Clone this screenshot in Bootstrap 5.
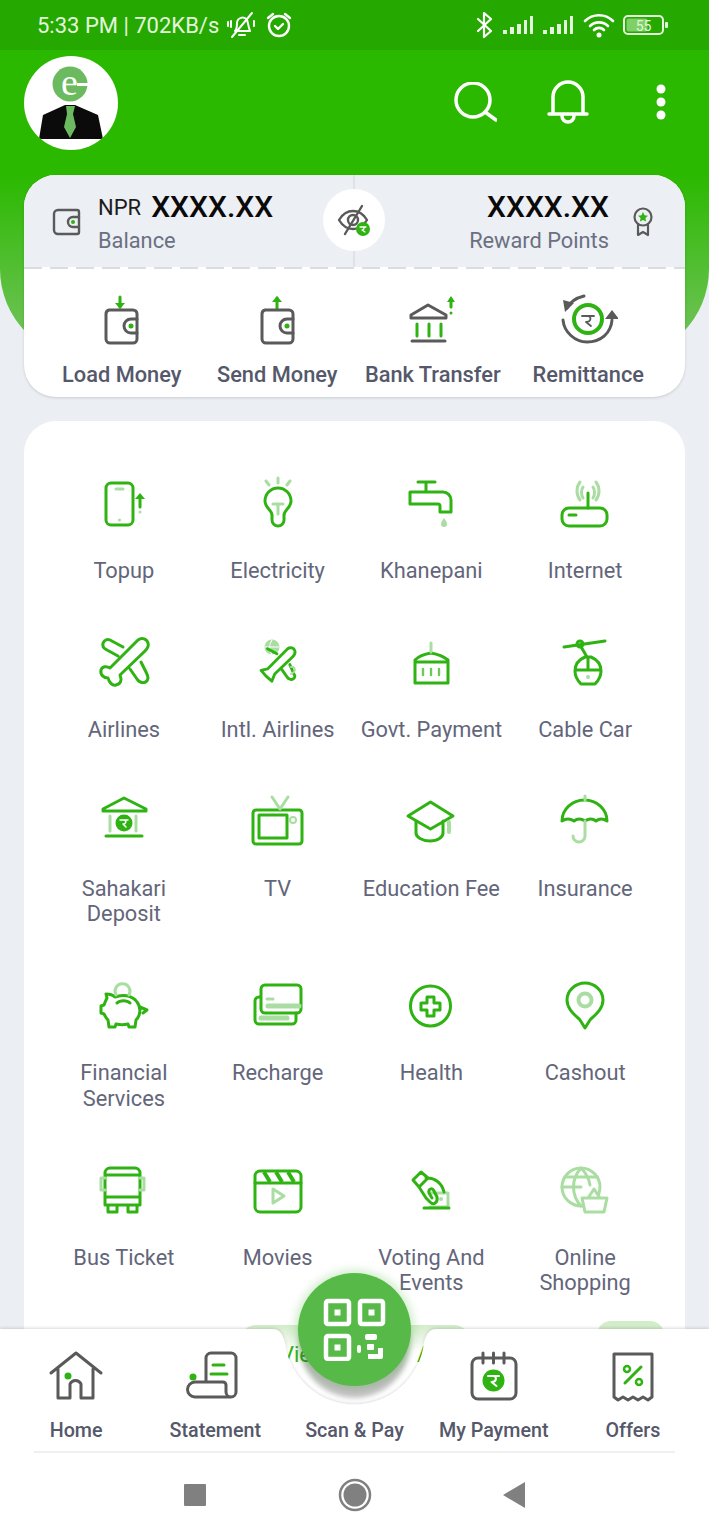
<!DOCTYPE html>
<html>
<head>
<title>eSewa home</title>
<link href="https://cdn.jsdelivr.net/npm/bootstrap@5.3.2/dist/css/bootstrap.min.css" rel="stylesheet">
<script src="https://cdn.jsdelivr.net/npm/bootstrap@5.3.2/dist/js/bootstrap.bundle.min.js"></script>
<style>
html, body { margin: 0; width: 709px; height: 1536px; overflow: hidden; background: #ebeff3; font-family: Roboto, "Liberation Sans", sans-serif; }
.phone { width: 709px; height: 1536px; overflow: hidden; position: relative; }
svg { display: block; }
.ic { fill: none; stroke: #2fb312; stroke-width: 3; stroke-linecap: round; stroke-linejoin: round; }
.pl { stroke: #a9dda1; }
.dk { stroke: #5a5a5a; }
.wh { stroke: #fff; }
.gf { fill: #2fb312; stroke: none; }
.pf { fill: #a9dda1; stroke: none; }
.df { fill: #5a5a5a; stroke: none; }

.status-bar { height: 50px; background: #25a900; padding: 0 41px 0 37px; color: #e4f5de; font-size: 22px; }
.hero { height: 309px; padding-top: 6px; background: linear-gradient(#2bb900 0, #2bb900 125px, #6cc254 280px); border-radius: 0 0 90px 90px / 0 0 90px 90px; }
.avatar { width: 94px; height: 94px; margin-left: 24px; border-radius: 50%; background: #fff; overflow: hidden; }
.top-actions { padding: 24px 40px 0 0; }
.top-actions .a1 { margin-right: 50px; }
.top-actions .a2 { margin-right: 64px; }

.content { margin-top: -184px; position: relative; padding: 0 24px; }
.bal-card { height: 222px; border-radius: 32px; background: #fff; overflow: hidden; box-shadow: 0 1px 3px rgba(0,0,0,.15); }
.bal-top { height: 94px; background: #eceff3; position: relative; padding: 0 32px 0 28px; }
.bal-top::after { content: ""; position: absolute; left: 0; right: 0; bottom: 0; height: 2px; background: repeating-linear-gradient(90deg, #d9dce0 0, #d9dce0 18px, #fff 18px, #fff 26px); }
.bal-top .divider { position: absolute; left: 329px; top: 0; bottom: 0; width: 2px; background: #dfe2e6; }
.eye-btn { position: absolute; left: 299px; top: 14px; width: 62px; height: 62px; border-radius: 50%; background: #fff; }
.npr { font-size: 22px; color: #1c1c1c; margin-right: 10px; }
.amt { font-size: 30px; font-weight: 500; color: #0a0a0a; line-height: 34px; }
.bal-label { font-size: 21.8px; color: #6b6f82; line-height: 26px; margin-top: 4px; }
.quick-row { padding: 19px 19px 0 20px; }
.quick-item { width: 155.5px; text-align: center; }
.quick-item svg { margin: 0 auto; }
.quick-item div { font-size: 21.8px; font-weight: 500; color: #55586b; line-height: 26px; margin-top: 14px; white-space: nowrap; }

.svc-card { margin-top: 24px; height: 1000px; border-radius: 32px; background: #fff; padding: 52px 23px 0; }
.svc-grid { row-gap: 49px; }
.svc-item { text-align: center; }
.svc-item svg { margin: 0 auto 24.5px; }
.svc-item div { font-size: 21.8px; color: #63667a; line-height: 25.5px; }
.pill-row { margin-top: 25.5px; height: 60px; margin-left: 193px; margin-right: -2px; }
.pill-a { width: 230px; height: 40px; margin-top: 4px; border-radius: 16px; text-align: center; color: #2fb312; font-size: 22px; line-height: 60px; word-spacing: 84px; white-space: nowrap; padding-left: 12px; background: linear-gradient(#d3ecca 0, #fff 26px); }
.pill-b { width: 67px; height: 30px; border-radius: 14px; background: #d3ecca; }

.bottom-nav { position: absolute; left: 0; right: 0; bottom: 0; height: 207px; }
.nav-shape { position: absolute; left: 0; top: -4px; }
.fab { position: absolute; left: 298px; top: -56px; width: 113px; height: 113px; border-radius: 50%; background: #57b947; box-shadow: 0 13px 5px -1px rgba(0,0,0,.24), 0 0 9px 3px rgba(87,185,71,.28); }
.fab svg { position: absolute; left: 25px; top: 25px; }
.nav-row { position: relative; padding: 16px 6.5px 0; }
.nav-row svg { margin: 0 auto; }
.nav-row div div { font-size: 19.7px; font-weight: 500; color: #55586b; line-height: 24px; margin-top: 14px; text-align: center; white-space: nowrap; }
.nav-rule { position: relative; margin: 8px 34px 0; height: 2px; background: #efefef; }
.sys-bar { position: relative; height: 84px; gap: 120px; }
.sys-bar svg { width: 40px; height: 40px; }
</style>
</head>
<body>
<div class="phone">

  <div class="status-bar d-flex align-items-center justify-content-between">
    <div class="d-flex align-items-center">
      <span>5:33 PM | 702KB/s</span>
      <svg class="ms-2" width="30" height="30" viewBox="0 0 30 30"><path class="ic wh" d="M8 21c2-2 2-4 2-8a5.500 5.500 0 0 1 10-3c1 2 1 6 3 11zM12 25h6M5 27 25 3M4 11v6M1 12v4M27 11v5" style="stroke-width:2"/></svg>
      <svg class="ms-2" width="28" height="28" viewBox="0 0 28 28"><circle class="ic wh" cx="14" cy="15" r="10" style="stroke-width:2.400"/><path class="ic wh" d="M3 7l5-4M25 7l-5-4M10 15l3 3 5-5" style="stroke-width:2.400"/></svg>
    </div>
    <div class="d-flex align-items-center">
      <svg class="me-1" width="20" height="30" viewBox="0 0 20 30"><path class="ic wh" d="M3 9l13 12-7 6V3l7 6L3 21" style="stroke-width:2.200"/></svg>
      <svg class="ms-1" width="32" height="18" viewBox="0 0 32 18"><path class="gf" style="fill:#e4f5de" d="M0 14h4v4H0zM7 11h4v7H7zM14 8h4v10h-4zM21 4h3v14h-3zM27 0h3v18h-3z"/></svg>
      <svg class="ms-2" width="32" height="18" viewBox="0 0 32 18"><path class="gf" style="fill:#e4f5de" d="M0 14h4v4H0zM7 11h4v7H7zM14 8h4v10h-4zM21 4h3v14h-3zM27 0h3v18h-3z"/></svg>
      <svg class="ms-2" width="32" height="26" viewBox="0 0 32 26"><path class="ic wh" d="M2 9a20 20 0 0 1 28 0M7 14a13 13 0 0 1 18 0M11 18a7 7 0 0 1 10 0" style="stroke-width:2.600"/><circle cx="16" cy="23" r="2.500" fill="#fff"/></svg>
      <svg class="ms-2" width="45" height="20" viewBox="0 0 45 20"><rect x="1" y="1" width="39" height="18" rx="4" fill="none" stroke="#e4f5de" stroke-width="2"/><rect x="3.500" y="3.500" width="21" height="13" rx="2" fill="#7fd066"/><rect x="42" y="7" width="3" height="6" rx="1" fill="#e4f5de"/><text x="20.500" y="15.500" font-size="14" fill="#e4f5de" text-anchor="middle" font-family="Roboto">55</text></svg>
    </div>
  </div>

  <div class="hero">
    <div class="d-flex justify-content-between align-items-start">
      <div class="avatar">
        <svg width="94" height="94" viewBox="0 0 94 94">
          <path fill="#0b0b0b" d="M15 83 19 59 41 49H51L74 59 79 83Z"/>
          <path fill="#6bba5f" d="M42 50h9l-2 8 3 13-6 11-6-11 3-13z"/>
          <circle cx="46" cy="28" r="17.500" fill="#6bba5f"/>
          <rect x="53" y="27" width="14" height="3" fill="#fff"/>
          <text x="45.500" y="39" font-size="38" fill="#fff" text-anchor="middle" font-family="Liberation Serif">e</text>
        </svg>
      </div>
      <div class="top-actions d-flex align-items-center">
        <svg class="a1" width="44" height="40" viewBox="0 0 44 40"><circle class="ic wh" cx="20" cy="18" r="17" style="stroke-width:3.500"/><path class="ic wh" d="M32 30 43 38" style="stroke-width:3.500"/></svg>
        <svg class="a2" width="42" height="44" viewBox="0 0 42 44"><path class="ic wh" d="M6 33V17a15 15 0 0 1 30 0v16M2 34h38" style="stroke-width:3.500"/><path class="ic wh" d="M15 36a6 6 0 0 0 12 0" style="stroke-width:3.500"/></svg>
        <svg width="16" height="36" viewBox="0 0 16 36"><circle cx="8" cy="5" r="4.500" fill="#fff"/><circle cx="8" cy="18" r="4.500" fill="#fff"/><circle cx="8" cy="31" r="4.500" fill="#fff"/></svg>
      </div>
    </div>
  </div>

  <div class="content">
    <div class="bal-card">
      <div class="bal-top d-flex align-items-center justify-content-between">
        <div class="divider"></div>
        <div class="d-flex align-items-center">
          <svg class="me-3" width="30" height="30" viewBox="0 0 30 30"><path class="ic dk" style="stroke-width:2.400" d="M6 3h19a2 2 0 0 1 2 2v20a2 2 0 0 1-2 2H6a4 4 0 0 1-4-4V7a4 4 0 0 1 4-4z"/><path class="ic dk" style="stroke-width:2.400" d="M27 10h-6a5 5 0 0 0 0 10h6"/><circle class="gf" cx="21" cy="15" r="2"/></svg>
          <div>
            <div class="d-flex align-items-center"><span class="npr">NPR</span><span class="amt">XXXX.XX</span></div>
            <div class="bal-label">Balance</div>
          </div>
        </div>
        <div class="eye-btn d-flex align-items-center justify-content-center">
          <svg width="36" height="36" viewBox="0 0 36 36"><path class="ic dk" style="stroke-width:2.400" d="M3 18c3-5 8-9 14-9s11 4 14 9c-3 5-8 9-14 9S6 23 3 18z"/><circle class="ic dk" style="stroke-width:2.400" cx="17" cy="18" r="5"/><path class="ic dk" style="stroke-width:2.400" d="M26 4 9 32"/><circle class="gf" cx="27" cy="27" r="7"/><path class="ic wh" style="stroke-width:1.300" d="M24 25h6M27 25c2 1 1 3-1 3l3 2"/></svg>
        </div>
        <div class="d-flex align-items-center">
          <div class="text-end">
            <div class="amt">XXXX.XX</div>
            <div class="bal-label">Reward Points</div>
          </div>
          <svg class="ms-4" width="20" height="30" viewBox="0 0 20 30"><circle class="ic dk" style="stroke-width:2.200" cx="10" cy="10" r="8.500"/><path class="ic dk" style="stroke-width:2.200" d="M5 17v11l5-3 5 3V17"/><path class="gf" d="m10 5 1.500 3.300 3.500.4-2.600 2.400.7 3.500L10 13l-3.100 1.600.7-3.500L5 8.700l3.500-.4z"/></svg>
        </div>
      </div>
      <div class="quick-row d-flex">
        <div class="quick-item">
          <svg width="60" height="60" viewBox="0 0 60 60"><path class="ic" d="M28 9v10"/><path class="gf" d="M23 15h10l-5 6z"/><path class="ic dk" d="M17 22h24a4 4 0 0 1 4 4v25a4 4 0 0 1-4 4H18a4 4 0 0 1-4-4V26a4 4 0 0 1 3-4z"/><path class="ic dk" d="M45 31h-6a7 7 0 0 0 0 14h6"/><circle class="gf" cx="39" cy="38" r="2.500"/></svg>
          <div>Load Money</div>
        </div>
        <div class="quick-item">
          <svg width="60" height="60" viewBox="0 0 60 60"><path class="ic" d="M30 10v10"/><path class="gf" d="M25 14h10l-5-6z"/><path class="ic dk" d="M18 22h24a4 4 0 0 1 4 4v25a4 4 0 0 1-4 4H19a4 4 0 0 1-4-4V26a4 4 0 0 1 3-4z"/><path class="ic dk" d="M46 31h-6a7 7 0 0 0 0 14h6"/><circle class="gf" cx="40" cy="38" r="2.500"/></svg>
          <div>Send Money</div>
        </div>
        <div class="quick-item">
          <svg width="60" height="60" viewBox="0 0 60 60"><path class="ic dk" d="M25 17 8 27v3h35v-3z"/><path class="ic" d="M14 36v12M26 36v12M38 36v12M48 11v8"/><path class="ic dk" d="M9 53h33"/><path class="gf" d="M44 14h8l-4-6z"/><circle class="gf" cx="48" cy="25" r="1.500"/></svg>
          <div>Bank Transfer</div>
        </div>
        <div class="quick-item">
          <svg width="60" height="60" viewBox="0 0 60 60"><circle class="ic" style="stroke-width:4" cx="30" cy="31" r="14"/><path class="ic dk" d="M26 8C18 10 12 14 9 20M5 32c1 12 12 22 24 22 14 0 24-9 25-22"/><path class="df" d="M5 12l11 3-9 9zM47 31h14l-7-9z"/><path class="ic dk" style="stroke-width:1.800" d="M24 28h12M30 28c4 1 3 6-2 6l5 4"/></svg>
          <div>Remittance</div>
        </div>
      </div>
    </div>

    <div class="svc-card">
      <div class="row g-0 svc-grid">
        <div class="col-3 svc-item">
          <svg width="60" height="60" viewBox="0 0 60 60"><rect class="ic" x="12" y="10" width="27" height="42" rx="5"/><path class="ic pl" d="M22 16h7"/><circle class="pf" cx="25.500" cy="47" r="1.500"/><path class="ic" d="M46 23v11"/><path class="gf" d="M41 26h10l-5-6z"/><circle class="pf" cx="46" cy="39" r="1.500"/></svg>
          <div>Topup</div>
        </div>
        <div class="col-3 svc-item">
          <svg width="60" height="60" viewBox="0 0 60 60"><path class="ic" d="M24 42c0-5-7-7-7-14a13 13 0 0 1 26 0c0 7-7 9-7 14v5a5 5 0 0 1-12 0z"/><path class="ic pl" d="M25 31h10M30 31v10M30 5v5M18 8l3 4M42 8l-3 4"/></svg>
          <div>Electricity</div>
        </div>
        <div class="col-3 svc-item">
          <svg width="60" height="60" viewBox="0 0 60 60"><path class="ic" d="M9 19h33a8 8 0 0 1 8 8v12H39v-6a2 2 0 0 0-2-2H9zM17 9h17M25 9v10"/><path class="pf" d="M43 45c2 3 3 4 3 6a3 3 0 0 1-6 0c0-2 1-3 3-6z"/></svg>
          <div>Khanepani</div>
        </div>
        <div class="col-3 svc-item">
          <svg width="60" height="60" viewBox="0 0 60 60"><rect class="ic" x="7" y="35" width="45" height="18" rx="7"/><path class="ic" d="M33 20v15M14 42h7"/><path class="ic pl" d="M25 9c-4 5-4 13 0 18M41 9c4 5 4 13 0 18M28 14c-2 3-2 8 0 11M38 14c2 3 2 8 0 11"/></svg>
          <div>Internet</div>
        </div>

        <div class="col-3 svc-item">
          <svg width="60" height="60" viewBox="0 0 60 60"><path class="ic" d="M44 8C48 5 53 7 54 11 55 14 53 17 51 19L26 43C28 48 27 52 22 53 18 54 15 50 14 46 10 46 6 43 7 38 8 34 13 34 16 36ZM29 15 16 8C12 6 8 10 9 14 9 16 11 17 13 18L24 24M36 37 43 47C46 52 53 52 54 46 54 44 53 42 52 40L47 30"/></svg>
          <div>Airlines</div>
        </div>
        <div class="col-3 svc-item">
          <svg width="60" height="60" viewBox="0 0 60 60"><circle class="pf" cx="24" cy="15" r="7.500"/><path style="fill:none;stroke:#fff;stroke-width:1.200" d="M17 15h14M24 8c-3 4-3 10 0 15"/><g transform="translate(8 11) scale(.72)"><path class="ic" style="stroke-width:4" d="M44 8C48 5 53 7 54 11 55 14 53 17 51 19L26 43 22 53 14 46 7 38 16 36ZM29 15 16 8M36 37 43 47C46 52 53 52 54 46L47 30"/></g><path class="ic pl" style="stroke-width:2" d="M43 35c3-1 5 2 3 5l-3 2"/></svg>
          <div>Intl. Airlines</div>
        </div>
        <div class="col-3 svc-item">
          <svg width="60" height="60" viewBox="0 0 60 60"><path class="ic" d="M14 51V28c4-4 10-6 16-7 6 1 12 3 17 7v23zM14 30h33"/><path class="ic pl" d="M30 11v9"/><path class="ic" style="stroke-width:2.400;stroke:#6cc95a" d="M22 37v6M30 37v6M38 37v6"/></svg>
          <div>Govt. Payment</div>
        </div>
        <div class="col-3 svc-item">
          <svg width="60" height="60" viewBox="0 0 60 60"><path class="ic" d="M9 15 50 9M32 25l-7-12M33 25h3c7 3 10 8 10 14 0 6-3 10-6 13H26c-3-3-6-7-6-13 0-6 3-11 10-14zM20 38h26M33 25v13"/><circle class="ic" cx="25" cy="12" r="3"/><circle class="pf" cx="33" cy="45" r="2"/></svg>
          <div>Cable Car</div>
        </div>

        <div class="col-3 svc-item">
          <svg width="60" height="60" viewBox="0 0 60 60"><path class="ic" d="M30 7 9 18v2h43v-2zM12 45h36"/><path class="ic pl" d="M16 25v15M42 25v15"/><circle class="gf" cx="30" cy="32" r="8.500"/><path class="ic wh" style="stroke-width:1.500" d="M26 29h8M30 29c3 1 2 4-1 4l3 3"/></svg>
          <div>Sahakari Deposit</div>
        </div>
        <div class="col-3 svc-item">
          <svg width="60" height="60" viewBox="0 0 60 60"><rect class="ic" x="5" y="19" width="49" height="34" rx="3"/><rect class="ic" x="11" y="24" width="28" height="23"/><circle class="ic pl" style="stroke-width:2" cx="45" cy="29" r="3"/><path class="ic pl" d="M24 6l8 12 8-12"/></svg>
          <div>TV</div>
        </div>
        <div class="col-3 svc-item">
          <svg width="60" height="60" viewBox="0 0 60 60"><path class="ic" d="M29.500 11 52 25 29.500 38 7 25zM15 30v12c0 4 6 8 14 8s13-4 13-8V30"/><path class="ic pl" style="stroke-width:4" d="M48 31v10"/></svg>
          <div>Education Fee</div>
        </div>
        <div class="col-3 svc-item">
          <svg width="60" height="60" viewBox="0 0 60 60"><path class="ic" d="M7 30a22.500 21 0 0 1 45 0q-6-4-11 0-5-4-11 0-6-4-11 0-6-4-12 0z"/><path class="ic pl" d="M30 5v4M30 30v15a6 6 0 0 1-12 0"/></svg>
          <div>Insurance</div>
        </div>

        <div class="col-3 svc-item">
          <svg width="60" height="60" viewBox="0 0 60 60"><path class="ic" d="M13 22l-1-4c4 0 7 1 9 3 7-3 17-2 22 5 4 5 4 13-1 18l-1 7h-6l-1-3c-4 1-8 1-12 0l-1 3h-6l-1-7c-2-2-3-4-4-6l-3-1v-7l3-1c1-3 2-5 3-7zM23 27c3-3 10-3 13 0M46 31l7 3-4 3"/><path class="ic pl" d="M22 19a7.500 7.500 0 1 1 13 0"/></svg>
          <div>Financial Services</div>
        </div>
        <div class="col-3 svc-item">
          <svg width="60" height="60" viewBox="0 0 60 60"><path class="ic" d="M12 21H11a4 4 0 0 0-4 4v19a4 4 0 0 0 4 4h33a4 4 0 0 0 4-4v-7"/><rect class="ic" x="13" y="9" width="40" height="28" rx="4"/><path class="ic pl" d="M19 23h6"/><path class="ic pl" style="stroke-width:5" d="M20 30h31M13 42h26"/></svg>
          <div>Recharge</div>
        </div>
        <div class="col-3 svc-item">
          <svg width="60" height="60" viewBox="0 0 60 60"><circle class="ic" cx="29.500" cy="30" r="20"/><path class="ic" d="M26 21h7v6h6v7h-6v6h-7v-6h-6v-7h6z"/></svg>
          <div>Health</div>
        </div>
        <div class="col-3 svc-item">
          <svg width="60" height="60" viewBox="0 0 60 60"><path class="ic" d="M30 7c10 0 18 8 18 17 0 9-8 15-13 20l-5 8-5-8C20 39 12 33 12 24c0-9 8-17 18-17z"/><circle class="ic pl" style="stroke-width:4" cx="30" cy="24" r="6.500"/></svg>
          <div>Cashout</div>
        </div>

        <div class="col-3 svc-item">
          <svg width="60" height="60" viewBox="0 0 60 60"><path class="ic" d="M16 8h25a5 5 0 0 1 5 5v32H11V13a5 5 0 0 1 5-5zM11 15h35M11 37h35M14 45v7h9v-7M34 45v7h9v-7"/><path class="ic pl" d="M11 18H7v12h4M46 18h4v12h-4"/></svg>
          <div>Bus Ticket</div>
        </div>
        <div class="col-3 svc-item">
          <svg width="60" height="60" viewBox="0 0 60 60"><rect class="ic" x="7" y="11" width="46" height="41" rx="5"/><path class="ic" d="M7 23h46"/><path class="ic" style="stroke-width:4;stroke-linecap:butt" d="M16 12l6 10M28 12l6 10M40 12l6 10"/><path class="ic pl" d="M25 29v14l11-7z"/></svg>
          <div>Movies</div>
        </div>
        <div class="col-3 svc-item">
          <svg width="60" height="60" viewBox="0 0 60 60"><path class="ic pl" d="M29 33h18v14H29"/><circle class="pf" cx="40" cy="39" r="2"/><path class="ic" d="M12 20l8-8 7 6-9 9zM25 18c8-1 16 5 18 14M18 27l7 11 4 4c4 4 8 0 7-5l-3-6c-2-4-6-2-5 2l3 5M23 48h25"/></svg>
          <div>Voting And Events</div>
        </div>
        <div class="col-3 svc-item">
          <svg width="60" height="60" viewBox="0 0 60 60"><circle class="ic pl" cx="26" cy="27" r="19"/><path class="ic pl" d="M7 27h19M26 8c-10 11-10 27 0 38M26 8c5 5 8 11 9 17M10 17h32"/><path class="ic pl" d="M27 38h25l-3 14H30zM33 38l6-9 6 9" style="fill:#fff"/></svg>
          <div>Online Shopping</div>
        </div>
      </div>
      <div class="pill-row d-flex">
        <div class="pill-a">View All</div>
        <div class="pill-b ms-auto"></div>
      </div>
    </div>
  </div>

  <div class="bottom-nav">
    <svg class="nav-shape" width="709" height="211" viewBox="0 0 709 211">
      <defs><filter id="ns" x="-5%" y="-5%" width="110%" height="110%"><feDropShadow dx="0" dy="-1" stdDeviation="1.500" flood-opacity=".15"/></filter></defs>
      <path filter="url(#ns)" fill="#fff" d="M0 4H272C280 4 283 10 285 18A70 70 0 0 0 424 18C426 10 429 4 437 4H709V211H0Z"/>
    </svg>
    <div class="fab">
      <svg width="63" height="63" viewBox="0 0 63 63">
        <g fill="none" stroke="#fff" stroke-width="4.500" stroke-linejoin="round">
          <rect x="3" y="3" width="23" height="23" rx="2"/><rect x="37" y="3" width="23" height="23" rx="2"/><rect x="3" y="38" width="23" height="23" rx="2"/>
        </g>
        <g fill="#fff"><rect x="11.500" y="11.500" width="6" height="6"/><rect x="45.500" y="11.500" width="6" height="6"/><rect x="11.500" y="46.500" width="6" height="6"/><rect x="42" y="36" width="12" height="6" rx="2"/><rect x="34" y="47" width="4" height="8" rx="2"/><rect x="44" y="46" width="7" height="6" rx="1"/><path d="M45 61v-5h10v-6h5v9a2 2 0 0 1-2 2z"/></g>
      </svg>
    </div>
    <div class="nav-row row g-0">
      <div class="col">
        <svg width="60" height="60" viewBox="0 0 60 60"><path class="ic dk" d="M5 28 30 8l25 20M12 24v29h12V39a6 6 0 0 1 11 0v14h12V24"/><circle class="gf" cx="22" cy="31" r="3.500"/></svg>
        <div>Home</div>
      </div>
      <div class="col">
        <svg width="60" height="60" viewBox="0 0 60 60"><path class="ic dk" d="M21 36V13a5 5 0 0 1 5-5h20a5 5 0 0 1 5 5v34a5 5 0 0 1-10 0v-7a3 3 0 0 0-3-3H10a6 6 0 0 0 0 15h36"/><path class="ic" d="M28 20h11M26 29h16"/><circle class="gf" cx="8" cy="32" r="3.500"/></svg>
        <div>Statement</div>
      </div>
      <div class="col">
        <svg width="60" height="60" viewBox="0 0 60 60"></svg>
        <div>Scan &amp; Pay</div>
      </div>
      <div class="col">
        <svg width="60" height="60" viewBox="0 0 60 60"><rect class="ic dk" x="8" y="13" width="44" height="41" rx="6"/><path class="ic dk" d="M19 8v10M29.500 8v10M40 8v10"/><circle class="gf" cx="29.500" cy="35.500" r="11"/><path class="ic wh" style="stroke-width:2" d="M24 31h11M29.500 31c4 1 3 6-2 6l5 4"/></svg>
        <div>My Payment</div>
      </div>
      <div class="col">
        <svg width="60" height="60" viewBox="0 0 60 60"><path class="ic dk" d="M11 9h38v43l-4 3-5-3-5 3-5-3-5 3-5-3-5 3-4-3z"/><path class="ic" d="M22 38 38 22"/><circle class="ic" style="stroke-width:2.500" cx="24" cy="24" r="3"/><circle class="ic" style="stroke-width:2.500" cx="36" cy="37" r="3"/></svg>
        <div>Offers</div>
      </div>
    </div>
    <div class="nav-rule"></div>
    <div class="sys-bar d-flex align-items-center justify-content-center">
      <svg viewBox="0 0 40 40"><rect x="9" y="9" width="22" height="22" rx="1" fill="#808080"/></svg>
      <svg viewBox="0 0 40 40"><circle cx="20" cy="20" r="15" fill="none" stroke="#808080" stroke-width="2.500"/><circle cx="20" cy="20" r="11.500" fill="#808080"/></svg>
      <svg viewBox="0 0 40 40"><path d="M8 20 30 7v26z" fill="#808080"/></svg>
    </div>
  </div>
</div>
</body>
</html>
